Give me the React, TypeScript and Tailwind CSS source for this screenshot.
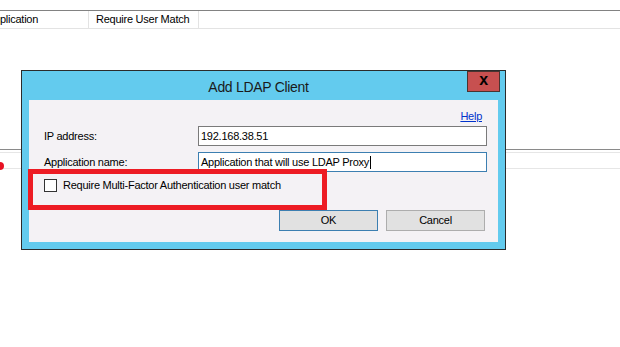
import React from "react";

const win = "font-['Liberation_Sans',Arial,sans-serif] text-[11px] tracking-[-0.25px] text-black";

function Field({ label, value, focused, caret }: { label: string; value: string; focused?: boolean; caret?: boolean }) {
  return <div className="flex h-[20px] items-center">
    <span className="w-[169px] pl-[15px]">{label}</span>
    <div className={`flex h-[20px] w-[289px] items-center border bg-white pl-[2px] ${focused ? "border-[#3c7fb1]" : "border-[#7a7a7a]"}`}>
      <span>{value}</span>
      {caret && <span className="ml-px inline-block h-[13px] w-px bg-black" />}
    </div>
  </div>;
}

export default function App() {
  return <main className={`relative h-[347px] w-[620px] overflow-hidden bg-white ${win}`}>
    {/* list behind the dialog */}
    <div className="h-[10px]" />
    <div className="h-px bg-[#828282]" />
    <div className="flex h-[18px] border-b border-[#e3e3e3]">
      <div className="w-[89px] overflow-hidden border-r border-[#e3e3e3]">
        <span className="ml-[-13px] block whitespace-nowrap leading-[17px]">Application</span>
      </div>
      <div className="w-[110px] border-r border-[#e3e3e3] pl-[7px] leading-[17px]">Require User Match</div>
    </div>
    <div className="h-[120px]" />
    <div className="h-px bg-[#8a8a8a]" />
    <div className="h-[2px]" />
    <div className="relative h-[17px] border-y border-[#e6e6e6]">
      <span className="absolute left-[-4px] top-[9px] h-[8px] w-[8px] rounded-full bg-[#e81123]" />
    </div>

    {/* dialog window */}
    <div className="absolute left-[21px] top-[70px] flex h-[180px] w-[485px] flex-col border border-[#2b2b2b] bg-[#63cbee]">
      <div className="relative flex h-[29px] shrink-0 items-center justify-center pr-[10px] pt-[3px] text-[14px] tracking-[-0.3px] text-[#1a1a1a]">
        Add LDAP Client
        <div className="absolute right-[5px] top-0 flex h-[21px] w-[33px] items-center justify-center border border-[#4a3330] bg-[#c75050] pb-[3px] text-[16px] font-bold text-black">x</div>
      </div>
      <div className="mx-[7px] flex h-[142px] flex-col bg-[#f4f2f5]">
        <div className="flex h-[26px] justify-end pr-[16px] pt-[10px]">
          <a className="leading-[13px] text-[#0033cc] underline">Help</a>
        </div>
        <Field label="IP address:" value="192.168.38.51" />
        <div className="h-[6px]" />
        <Field label="Application name:" value="Application that will use LDAP Proxy" focused caret />
        <div className="h-[7px]" />
        <div className="flex h-[13px] items-center gap-[6px] pl-[15px]">
          <span className="h-[13px] w-[13px] shrink-0 border border-[#333] bg-white" />
          <span className="leading-[13px]">Require Multi-Factor Authentication user match</span>
        </div>
        <div className="mt-[18px] flex justify-end gap-[8px] pr-[13px]">
          <button className="h-[21px] w-[99px] border border-[#3c7fb1] bg-[#e1e1e1]">OK</button>
          <button className="h-[21px] w-[99px] border border-[#adadad] bg-[#e1e1e1]">Cancel</button>
        </div>
      </div>
    </div>

    {/* red highlight annotation */}
    <div className="absolute left-[28px] top-[169px] h-[41px] w-[299px] border-[5px] border-[#ed1c24]" />
  </main>;
}
